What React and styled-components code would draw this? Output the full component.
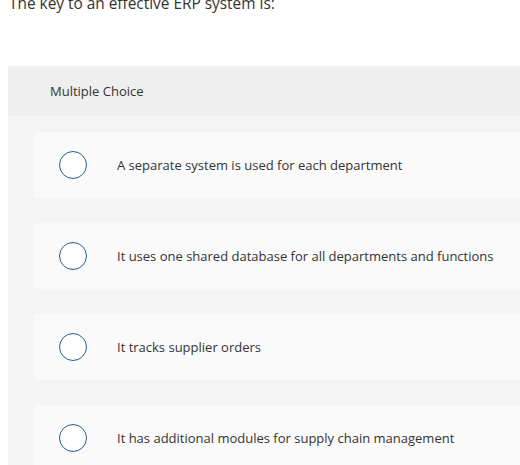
import styled, { createGlobalStyle } from 'styled-components';

const GlobalStyle = createGlobalStyle`
  html, body {
    margin: 0;
    padding: 0;
    overflow: hidden;
    background: #ffffff;
  }
  body {
    font-family: 'Open Sans', 'Liberation Sans', Arial, sans-serif;
    color: #333333;
  }
`;

const Page = styled.div`
  width: 540px;
  padding-left: 8px;
`;

const Question = styled.p`
  margin: -6px 0 0 1px;
  font-size: 15.4px;
  line-height: 20px;
  color: #333333;
`;

const Panel = styled.div`
  margin-top: 52px;
  background: #f5f5f5;
`;

const PanelHeader = styled.div`
  height: 50px;
  display: flex;
  align-items: center;
  padding-left: 42px;
  background: #efefef;
  font-size: 13px;
  color: #333333;
`;

const Choices = styled.div`
  display: flex;
  flex-direction: column;
  gap: 25px;
  padding: 16px 0 20px 26px;
`;

const Choice = styled.label`
  height: 66px;
  display: flex;
  align-items: center;
  background: #fafafa;
  border-radius: 3px;
  cursor: pointer;
`;

const Radio = styled.span`
  box-sizing: border-box;
  width: 28px;
  height: 28px;
  margin-left: 25px;
  margin-right: 30px;
  border: 1.5px solid #1f5e9d;
  border-radius: 50%;
  background: #ffffff;
  flex: none;
`;

const ChoiceText = styled.span`
  font-size: 13px;
  color: #333333;
`;

const options = [
  'A separate system is used for each department',
  'It uses one shared database for all departments and functions',
  'It tracks supplier orders',
  'It has additional modules for supply chain management',
];

export default function App() {
  return (
    <>
      <GlobalStyle />
      <Page>
        <Question>The key to an effective ERP system is:</Question>
        <Panel>
          <PanelHeader>Multiple Choice</PanelHeader>
          <Choices>
            {options.map((opt) => (
              <Choice key={opt}>
                <Radio />
                <ChoiceText>{opt}</ChoiceText>
              </Choice>
            ))}
          </Choices>
        </Panel>
      </Page>
    </>
  );
}
